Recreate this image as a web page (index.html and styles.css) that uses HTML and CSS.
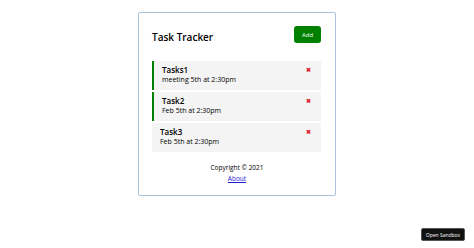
FILE: index.html
```html
<!doctype html>
<html lang="en">
    <head>
        <meta charset="UTF-8" />
        <meta name="viewport" content="width=device-width, initial-scale=1.0" />
        <title>Task Tracker</title>
        <link rel="stylesheet" href="styles.css">
    </head>
    <body>
        <div class="container">
            <header class="header">
                <h1>Task Tracker</h1>
                <button class="btn">Add</button>
            </header>
            <div class="task reminder">
                <h3>Tasks1 <span class="del">&#x2716;</span></h3>
                <p>meeting 5th at 2:30pm</p>
            </div>
            <div class="task reminder">
                <h3>Task2 <span class="del">&#x2716;</span></h3>
                <p>Feb 5th at 2:30pm</p>
            </div>
            <div class="task">
                <h3>Task3 <span class="del">&#x2716;</span></h3>
                <p>Feb 5th at 2:30pm</p>
            </div>
            <footer class="footer">
                <p>Copyright &copy; 2021</p>
                <a href="#">About</a>
            </footer>
        </div>
        <button class="sandbox">Open Sandbox</button>
    </body>
</html>
```

FILE: styles.css
```css
* {
    box-sizing: border-box;
}
body {
    font-family: "Open Sans", sans-serif;
    margin: 0;
    padding: 0;
    background-color: #fff;
    color: #000;
}
.container {
    width: 198px;
    margin: 12px 0 0 138px;
    border: 1px solid #a9c3dc;
    border-radius: 2px;
    padding: 13px 13px 11px 13px;
}
.header {
    display: flex;
    justify-content: space-between;
    align-items: flex-start;
    height: 32px;
    margin-bottom: 3px;
}
.header h1 {
    font-size: 10px;
    font-weight: 600;
    line-height: 12px;
    margin: 5px 0 0;
}
.btn {
    background-color: #008000;
    color: #fff;
    border: none;
    border-radius: 3px;
    width: 27px;
    height: 17px;
    font-family: inherit;
    font-size: 6px;
    padding: 0;
    margin-right: 1px;
    cursor: pointer;
}
.task {
    background-color: #f4f4f4;
    margin: 0 1px 2px 0;
    padding: 4px 8px;
    height: 29px;
}
.task.reminder {
    border-left: 2px solid #008000;
}
.task h3 {
    display: flex;
    justify-content: space-between;
    align-items: center;
    font-size: 8px;
    font-weight: 600;
    margin: 0;
    line-height: 10px;
}
.task p {
    font-size: 7px;
    margin: 0;
    line-height: 10px;
}
.del {
    color: #e0202a;
    font-size: 6px;
    margin-right: 2px;
}
.footer {
    text-align: center;
    margin-top: 10px;
    font-size: 6.5px;
    line-height: 11px;
}
.footer p {
    margin: 0;
}
.footer a {
    color: #2222cc;
}
.sandbox {
    position: fixed;
    right: 9px;
    bottom: 7px;
    width: 44px;
    height: 13px;
    background-color: #111;
    color: #fff;
    border: 1px solid #555;
    border-radius: 2px;
    font-family: inherit;
    font-size: 5px;
    padding: 0;
}
```
